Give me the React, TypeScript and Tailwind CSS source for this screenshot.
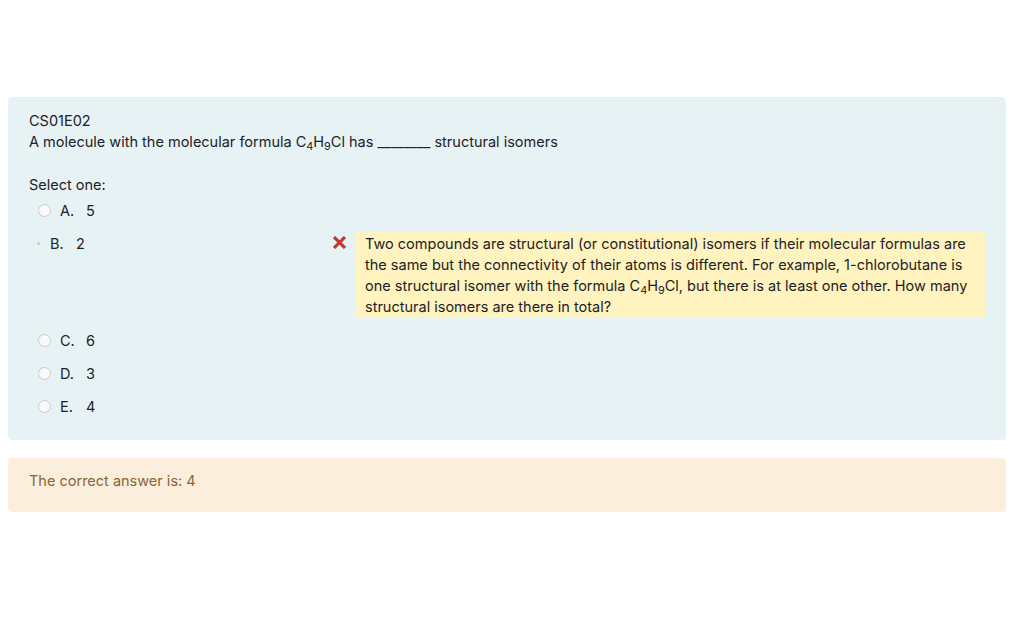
import React from "react";

const options = [
    { letter: "A.", value: "5" },
    { letter: "B.", value: "2", chosen: true },
    { letter: "C.", value: "6" },
    { letter: "D.", value: "3" },
    { letter: "E.", value: "4" },
];

function Formula() {
    return (
        <span>
            C<sub className="leading-none">4</sub>H<sub className="leading-none">9</sub>Cl
        </span>
    );
}

function WrongIcon() {
    return (
        <svg viewBox="0 0 14 14" className="h-[13px] w-[13px]" aria-hidden="true">
            <path d="M2.3 2.3 L11.7 11.7 M11.7 2.3 L2.3 11.7" stroke="#c0392b" strokeWidth="3.4" strokeLinecap="square" />
        </svg>
    );
}

export default function App() {
    return (
        <div
            className="min-h-screen bg-white pt-[97px] text-[14.5px] leading-[21px] text-[#1d2125]"
            style={{ fontFamily: "Inter, 'Noto Sans', sans-serif" }}
        >
            {/* Question */}
            <div className="ml-2 w-[998px] rounded bg-[#e7f2f5] px-[21px] pt-[13px] pb-[17px]">
                <div>CS01E02</div>
                <div>
                    A molecule with the molecular formula <Formula /> has ________ structural isomers
                </div>

                <div className="mt-[22px]">Select one:</div>

                <div className="mt-[-1px]">
                    {options.map((opt) =>
                        opt.chosen ? (
                            <div key={opt.letter} className="flex items-start pt-[5px] pb-[6px]">
                                <div className="flex w-[304px] shrink-0 items-center pt-px">
                                    <span className="ml-[8px] mr-[10px] h-[3px] w-[3px] rounded-full bg-[#c4c8cc]" />
                                    <span className="w-[26px]">{opt.letter}</span>
                                    <span>{opt.value}</span>
                                </div>
                                <div className="mr-[9px] flex h-[21px] items-center">
                                    <WrongIcon />
                                </div>
                                <div className="flex-1 bg-[#fff3bf] px-[10px] py-px">
                                    Two compounds are structural (or constitutional) isomers if their molecular formulas are
                                    the same but the connectivity of their atoms is different. For example, 1-chlorobutane is
                                    one structural isomer with the formula <Formula />, but there is at least one other. How many
                                    structural isomers are there in total?
                                </div>
                            </div>
                        ) : (
                            <div key={opt.letter} className="flex items-center py-[6px]">
                                <span className="ml-[9px] mr-[9px] h-[13px] w-[13px] rounded-full border border-[#c8ccd0] bg-[#f7f9fa]" />
                                <span className="w-[26px]">{opt.letter}</span>
                                <span>{opt.value}</span>
                            </div>
                        )
                    )}
                </div>
            </div>

            {/* Outcome */}
            <div className="ml-2 mt-[18px] w-[998px] rounded bg-[#fbeedd] px-[21px] pt-[12px] pb-[21px] text-[#8a6534]">
                The correct answer is: 4
            </div>
        </div>
    );
}
